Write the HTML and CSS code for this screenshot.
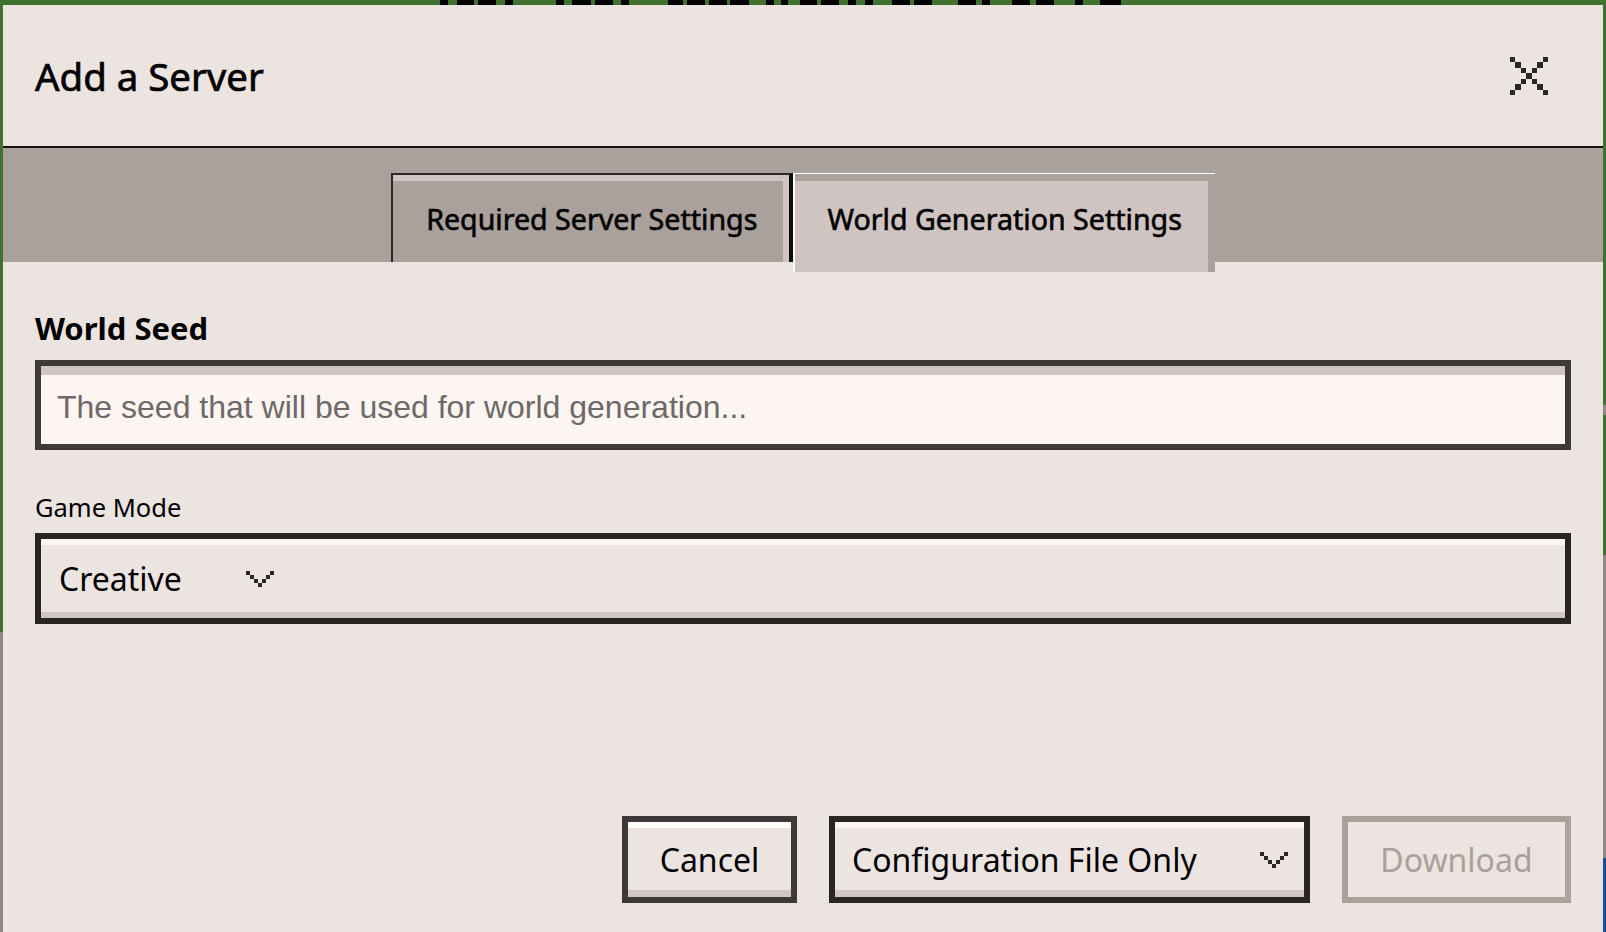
FILE: index.html
```html
<!DOCTYPE html>
<html lang="en">
  <head>
    <meta charset="UTF-8" />
    <meta name="viewport" content="width=device-width, initial-scale=1.0" />
    <title>Add a Server</title>
    <link rel="stylesheet" href="styles.css">
  </head>
  <body>
    <div class="backdrop-top"></div>
    <div class="stage">
      <div class="edge edge-left"></div>

      <div class="dialog">
        <header class="dialog-header">
          <h1>Add a Server</h1>
          <button class="close-btn" aria-label="Close">
            <svg width="38" height="38" viewBox="0 0 7 7" shape-rendering="crispEdges">
              <rect x="0" y="0" width="1" height="1" />
              <rect x="1" y="1" width="1" height="1" />
              <rect x="2" y="2" width="1" height="1" />
              <rect x="3" y="3" width="1" height="1" />
              <rect x="4" y="4" width="1" height="1" />
              <rect x="5" y="5" width="1" height="1" />
              <rect x="6" y="6" width="1" height="1" />
              <rect x="6" y="0" width="1" height="1" />
              <rect x="5" y="1" width="1" height="1" />
              <rect x="4" y="2" width="1" height="1" />
              <rect x="2" y="4" width="1" height="1" />
              <rect x="1" y="5" width="1" height="1" />
              <rect x="0" y="6" width="1" height="1" />
            </svg>
          </button>
        </header>

        <nav class="tab-bar">
          <button class="tab">Required Server Settings</button>
          <button class="tab tab-active">World Generation Settings</button>
        </nav>

        <main class="dialog-body">
          <label class="field-title" for="seed">World Seed</label>
          <input id="seed" class="text-input" type="text" placeholder="The seed that will be used for world generation..." />

          <label class="field-label">Game Mode</label>
          <div class="select">
            <span class="select-value">Creative</span>
            <svg class="chevron" width="28" height="16" viewBox="0 0 7 4" shape-rendering="crispEdges">
              <rect x="0" y="0" width="1" height="1" />
              <rect x="1" y="1" width="1" height="1" />
              <rect x="2" y="2" width="1" height="1" />
              <rect x="3" y="3" width="1" height="1" />
              <rect x="4" y="2" width="1" height="1" />
              <rect x="5" y="1" width="1" height="1" />
              <rect x="6" y="0" width="1" height="1" />
            </svg>
          </div>
        </main>

        <footer class="dialog-footer">
          <button class="btn btn-cancel">Cancel</button>
          <div class="select select-export">
            <span>Configuration File Only</span>
            <svg class="chevron" width="28" height="16" viewBox="0 0 7 4" shape-rendering="crispEdges">
              <rect x="0" y="0" width="1" height="1" />
              <rect x="1" y="1" width="1" height="1" />
              <rect x="2" y="2" width="1" height="1" />
              <rect x="3" y="3" width="1" height="1" />
              <rect x="4" y="2" width="1" height="1" />
              <rect x="5" y="1" width="1" height="1" />
              <rect x="6" y="0" width="1" height="1" />
            </svg>
          </div>
          <button class="btn btn-disabled" disabled>Download</button>
        </footer>
      </div>

      <div class="edge edge-right"></div>
    </div>
  </body>
</html>
```

FILE: styles.css
```css
body {
  margin: 0;
  background-color: #41712f;
  font-family: "Noto Sans", "Open Sans", sans-serif;
  color: #000;
  overflow: hidden;
}

button,
input {
  font: inherit;
  color: inherit;
}

/* bits of the page behind the dialog */
.backdrop-top {
  height: 5px;
  background: linear-gradient(
    to right,
    #41712f 0 440px,
    #000 440px 448px, #41712f 448px 457px,
    #000 457px 474px, #41712f 474px 478px,
    #000 478px 496px, #41712f 496px 505px,
    #000 505px 513px, #41712f 513px 556px,
    #000 556px 564px, #41712f 564px 572px,
    #000 572px 591px, #41712f 591px 595px,
    #000 595px 613px, #41712f 613px 621px,
    #000 621px 629px, #41712f 629px 668px,
    #000 668px 683px, #41712f 683px 687px,
    #000 687px 705px, #41712f 705px 709px,
    #000 709px 727px, #41712f 727px 730px,
    #000 730px 749px, #41712f 749px 766px,
    #000 766px 774px, #41712f 774px 781px,
    #000 781px 788px, #41712f 788px 800px,
    #000 800px 817px, #41712f 817px 821px,
    #000 821px 839px, #41712f 839px 848px,
    #000 848px 856px, #41712f 856px 865px,
    #000 865px 873px, #41712f 873px 892px,
    #000 892px 910px, #41712f 910px 914px,
    #000 914px 932px, #41712f 932px 958px,
    #000 958px 976px, #41712f 976px 982px,
    #000 982px 990px, #41712f 990px 1012px,
    #000 1012px 1030px, #41712f 1030px 1036px,
    #000 1036px 1054px, #41712f 1054px 1075px,
    #000 1075px 1083px, #41712f 1083px 1100px,
    #000 1100px 1121px, #41712f 1121px
  );
}

.stage {
  display: flex;
  height: 927px;
}

.edge {
  width: 3px;
  flex-shrink: 0;
}

.edge-left {
  background: linear-gradient(#41712f 0 627px, #8f8886 627px);
}

.edge-right {
  background: linear-gradient(#41712f 0 400px, #8f8886 400px 410px, #41712f 410px 550px, #8f8886 550px 853px, #1d4a9a 853px);
}

.dialog {
  flex: 1;
  display: flex;
  flex-direction: column;
  background-color: #ece4e1;
}

/* header */
.dialog-header {
  height: 141px;
  display: flex;
  align-items: center;
  justify-content: space-between;
  padding: 0 55px 0 32px;
  border-bottom: 2px solid #141110;
}

.dialog-header h1 {
  margin: 0;
  font-size: 38.4px;
  font-weight: 400;
  -webkit-text-stroke: 0.7px #000;
}

.close-btn {
  padding: 0;
  border: none;
  background: none;
  width: 38px;
  height: 38px;
  cursor: pointer;
  fill: #2b2726;
}

.close-btn svg {
  display: block;
}

/* tabs */
.tab-bar {
  height: 114px;
  box-sizing: border-box;
  padding-top: 25px;
  display: flex;
  justify-content: center;
  align-items: flex-start;
  background-color: #aaa09c;
}

.tab {
  font-size: 28.6px;
  font-weight: 400;
  line-height: 40px;
  -webkit-text-stroke: 0.6px #000;
  white-space: nowrap;
  cursor: pointer;
}

.tab:not(.tab-active) {
  height: 89px;
  padding: 24px 32px 23px 33px;
  background-color: #aaa09c;
  border: none;
  border-top: 2px solid #2b2726;
  border-left: 2px solid #2b2726;
  border-right: 4px solid #0d0b0b;
  box-shadow: inset 0 6px #d0c5c2, inset -6px 0 #d0c5c2;
}

.tab-active {
  height: 99px;
  padding: 25px 33px 33px 32px;
  background-color: #cfc4c1;
  border: none;
  border-top: 1px solid #fff;
  border-left: 2px solid #fff;
  box-shadow: inset 0 7px #aaa09c, inset -7px 0 #aaa09c;
}

/* form */
.dialog-body {
  display: flex;
  flex-direction: column;
  padding: 46px 32px 0;
}

.field-title {
  font-size: 31px;
  font-weight: 700;
  line-height: 40px;
  margin-bottom: 12px;
}

.text-input {
  height: 90px;
  box-sizing: border-box;
  border: 6px solid #3d3938;
  box-shadow: inset 0 9px #d0c5c2;
  background-color: #fcf5f2;
  padding: 4px 16px 0;
  font-family: "Liberation Sans", Arial, sans-serif;
  font-size: 32px;
  outline: none;
}

.text-input::placeholder {
  color: #6e6866;
}

.field-label {
  margin-top: 40px;
  margin-bottom: 9px;
  font-size: 25.5px;
  line-height: 34px;
}

.select {
  height: 91px;
  box-sizing: border-box;
  display: flex;
  align-items: center;
  padding-left: 18px;
  border: 6px solid #282524;
  box-shadow: inset 0 6px #fcf5f2, inset 0 -6px #d0c5c2;
  font-size: 32px;
  fill: #2b2726;
}

.select-value {
  width: 187px;
}

.chevron {
  display: block;
  flex-shrink: 0;
}

/* footer */
.dialog-footer {
  margin-top: auto;
  display: flex;
  justify-content: flex-end;
  gap: 32px;
  padding: 0 32px 29px;
}

.btn {
  height: 87px;
  box-sizing: border-box;
  border: 6px solid #3d3938;
  background-color: #ece4e1;
  font-size: 32px;
  padding: 0;
  cursor: pointer;
}

.btn-cancel {
  width: 175px;
  box-shadow: inset 0 6px #fff, inset 0 -7px #d0c5c2;
}

.select-export {
  width: 481px;
  height: 87px;
  justify-content: space-between;
  padding: 0 16px 0 17px;
  box-shadow: inset 0 6px #fcf5f2, inset 0 -7px #d0c5c2;
}

.btn-disabled {
  width: 229px;
  border-color: #aaa09c;
  color: #aaa09c;
  cursor: default;
}
```
